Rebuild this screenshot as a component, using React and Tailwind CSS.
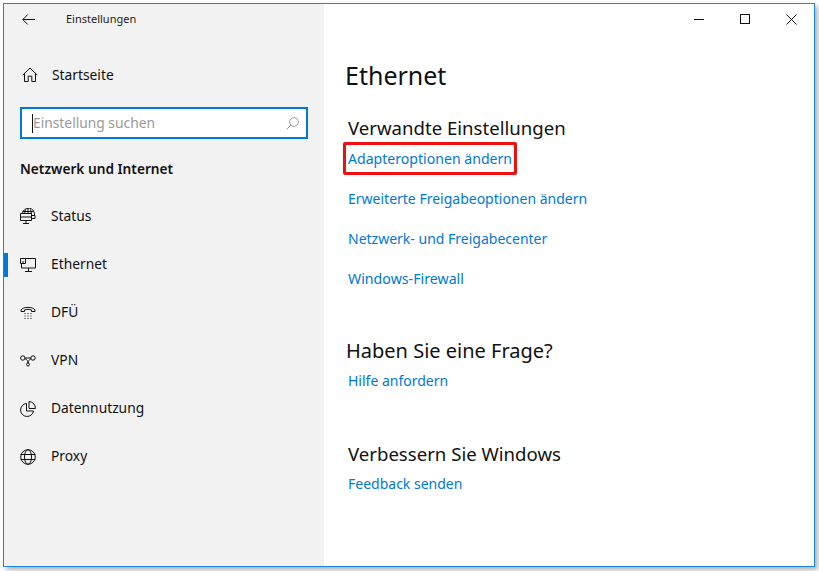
const font = "font-['Noto_Sans','Open_Sans',sans-serif]";

const BackIcon = () => (
  <svg width="13" height="11" viewBox="0 0 13 11" fill="none" stroke="#111" strokeWidth="1">
    <path d="M5.800.5.800 5.500l5 5M.8 5.500H13" />
  </svg>
);

const SearchIcon = () => (
  <svg width="13" height="13" viewBox="0 0 13 13" fill="none" stroke="#a0a0a0" strokeWidth="1">
    <circle cx="8" cy="5" r="4.300" />
    <path d="M5 8 .7 12.300" />
  </svg>
);

const HomeIcon = () => (
  <svg width="16" height="16" viewBox="0 0 16 16" fill="none" stroke="#111" strokeWidth="1">
    <path d="M.8 8 8 1l7.2 7M2.500 6.500v8h3.700V9.200h3.600v5.300h3.700v-8" />
  </svg>
);

const StatusIcon = () => (
  <svg width="16" height="17" viewBox="0 0 16 17" fill="none" stroke="#111" strokeWidth="1">
    <path d="M2.500 5.500a6 6 0 0 1 12 1.500M5.500 1.500 4.500 5.500M10.500 1.500l1 4.500M8 .5v5M2.500 3.500h11" />
    <path d="M.5 5.500h11v7H.5zM11.500 7.500h3.500v3h-3.500M.5 9h11M6 12.500v2.500M3 15.500h6" />
  </svg>
);

const EthernetIcon = () => (
  <svg width="16" height="14" viewBox="0 0 16 14" fill="none" stroke="#111" strokeWidth="1">
    <path d="M5.500.5h10v9.500H1.500V6M8.500 10v3M5 13.500h7" />
    <path d="M.5.5h5v5h-5zM3 3v3" />
  </svg>
);

const DialIcon = () => (
  <svg width="16" height="16" viewBox="0 0 16 16" fill="none" stroke="#111" strokeWidth="1">
    <path d="M1 6.500V5c2-3.500 12-3.500 14 0v1.500h-3.500V5c-2-.8-5-.8-7 0v1.500z" />
    <path d="M4.500 8.500h1M7.500 8.500h1M10.500 8.500h1M4.500 11h1M7.500 11h1M10.500 11h1M4.500 13.500h1M7.500 13.500h1M10.500 13.500h1" />
  </svg>
);

const VpnIcon = () => (
  <svg width="16" height="12" viewBox="0 0 16 12" fill="none" stroke="#111" strokeWidth="1">
    <circle cx="2.800" cy="3" r="2.200" />
    <circle cx="13" cy="3" r="2.200" />
    <circle cx="8" cy="9.500" r="1.500" />
    <path d="M5 3c2 0 4.500 0 6 0M5 3.500c2 1 3 2.500 3 4.500M11 3.500c-1.500 1-3 2.500-3 4.500" />
  </svg>
);

const DataIcon = () => (
  <svg width="16" height="16" viewBox="0 0 16 16" fill="none" stroke="#111" strokeWidth="1">
    <path d="M6.500 2.500a6.500 6.500 0 1 0 7 7.500H6.500z" />
    <path d="M9 .6a6.500 6.500 0 0 1 6.400 6.900H9z" />
  </svg>
);

const GlobeIcon = () => (
  <svg width="16" height="16" viewBox="0 0 16 16" fill="none" stroke="#111" strokeWidth="1">
    <circle cx="8" cy="8" r="7.300" />
    <ellipse cx="8" cy="8" rx="3.500" ry="7.300" />
    <path d="M.7 5.500h14.600M.7 10.500h14.600" />
  </svg>
);

const navItems = [
  { label: "Status", icon: <StatusIcon /> },
  { label: "Ethernet", icon: <EthernetIcon />, active: true },
  { label: "DFÜ", icon: <DialIcon /> },
  { label: "VPN", icon: <VpnIcon /> },
  { label: "Datennutzung", icon: <DataIcon /> },
  { label: "Proxy", icon: <GlobeIcon /> },
];

const NavItem = ({ label, icon, active }) => (
  <div className="flex items-center h-12">
    <div className={active ? "w-1 h-6 bg-[#0078d7]" : "w-1 h-6"} />
    <div className="w-4 ml-3 flex justify-center">{icon}</div>
    <span className="ml-[15px] text-[13.8px] text-[#111]">{label}</span>
  </div>
);

const Link = ({ children, className = "" }) => (
  <a className={`block leading-5 text-[#0078d7] ${className}`}>{children}</a>
);

export default function App() {
  return (
    <div className={`w-[819px] h-[571px] bg-white overflow-hidden ${font}`}>
      <div className="ml-[3px] mt-[3px] w-[812px] h-[564px] flex border border-[#1a86dc] bg-white shadow-[3px_3px_5px_rgba(0,0,0,0.3)]">
        <aside className="w-[320px] bg-[#f2f2f2] flex flex-col">
          <div className="flex items-center h-[30px] pl-[18px]">
            <BackIcon />
            <span className="ml-[31px] text-[11px] text-[#222]">Einstellungen</span>
          </div>
          <div className="flex items-center h-[48px] mt-[17px] pl-[18px]">
            <HomeIcon />
            <span className="ml-[14px] text-[13.8px] text-[#111]">Startseite</span>
          </div>
          <div className="ml-[16px] mt-[8px] w-[288px] h-[32px] flex items-center border-2 border-[#0078d7] bg-white pl-[10px] pr-[7px]">
            <div className="w-px h-[19px] bg-[#111]" />
            <span className="flex-1 text-[13.8px] text-[#9a9a9a]">Einstellung suchen</span>
            <SearchIcon />
          </div>
          <div className="ml-[16px] mt-[20px] text-[13.7px] font-semibold text-[#111]">Netzwerk und Internet</div>
          <nav className="mt-[13px]">
            {navItems.map((item) => (
              <NavItem key={item.label} {...item} />
            ))}
          </nav>
        </aside>
        <main className="flex-1 flex flex-col relative">
          <div className="flex justify-end h-[30px] text-[#111]">
            <div className="w-[46px] flex items-center justify-center">
              <div className="w-[10px] h-px bg-[#111]" />
            </div>
            <div className="w-[46px] flex items-center justify-center">
              <div className="w-[10px] h-[10px] border border-[#111]" />
            </div>
            <div className="w-[46px] flex items-center justify-center">
              <svg width="11" height="11" viewBox="0 0 11 11" stroke="#111" strokeWidth="1">
                <path d="M.5.500l10 10M10.500.500l-10 10" />
              </svg>
            </div>
          </div>
          <h1 className="ml-[21px] mt-[21px] text-[25px] leading-[40px] text-[#111]">Ethernet</h1>
          <h2 className="ml-[24px] mt-[20px] text-[18.6px] leading-[26px] text-[#111]">Verwandte Einstellungen</h2>
          <div className="ml-[24px] mt-[5px]">
            <span className="relative inline-block">
              <Link className="text-[14.1px]">Adapteroptionen ändern</Link>
              <span className="absolute -left-[5px] -right-[5px] -top-[7px] -bottom-[6px] border-[3px] border-[#f01010] rounded-[2px]" />
            </span>
            <Link className="mt-[19px] text-[14px]">Erweiterte Freigabeoptionen ändern</Link>
            <Link className="mt-5 text-[14px]">Netzwerk- und Freigabecenter</Link>
            <Link className="mt-5 text-[14.2px]">Windows-Firewall</Link>
          </div>
          <h2 className="ml-[22px] mt-[49px] text-[20px] leading-[26px] text-[#111]">Haben Sie eine Frage?</h2>
          <Link className="ml-[24px] mt-[7px] text-[14px]">Hilfe anfordern</Link>
          <h2 className="ml-[24px] mt-[50px] text-[18.6px] leading-[26px] text-[#111]">Verbessern Sie Windows</h2>
          <Link className="ml-[24px] mt-[7px] text-[14px]">Feedback senden</Link>
        </main>
      </div>
    </div>
  );
}
